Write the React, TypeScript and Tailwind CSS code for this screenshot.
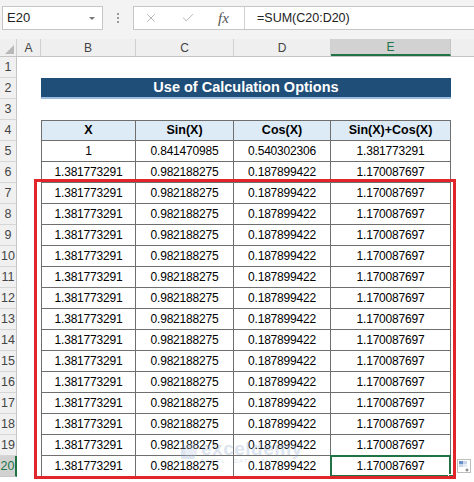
import React from 'react';
import { X, Check } from 'lucide-react';

const colWidths = ['w-[95px]', 'w-[98px]', 'w-[97px]', 'w-[120px]'];

const headers = ['X', 'Sin(X)', 'Cos(X)', 'Sin(X)+Cos(X)'];
const firstRow = ['1', '0.841470985', '0.540302306', '1.381773291'];
const repeatRow = ['1.381773291', '0.982188275', '0.187899422', '1.170087697'];

const RowHeader: React.FC<{ n: number; active?: boolean }> = ({ n, active }) => (
  <div
    className={
      active
        ? 'w-[17px] h-full flex items-center justify-center bg-[#d2d2d2] border-b border-[#c8c8c8] border-r-2 border-r-[#217346] text-[#217346] text-[12.5px]'
        : 'w-[17px] h-full flex items-center justify-center bg-[#f0f0f0] border-b border-[#d6d6d6] border-r border-r-[#c4c4c4] text-[#444] text-[12.5px]'
    }
  >
    {n}
  </div>
);

const Cell: React.FC<{
  i: number;
  top?: boolean;
  head?: boolean;
  selected?: boolean;
  children?: React.ReactNode;
}> = ({ i, top, head, selected, children }) => {
  let cls = `${colWidths[i]} h-full relative flex items-center justify-center border-r border-b border-[#6f6f6f]`;
  if (i === 0) cls += ' border-l';
  if (top) cls += ' border-t';
  if (head) cls += ' bg-[#ddebf7] font-bold text-[12.5px]';
  else cls += ' text-[12px] tracking-[-0.2px]';
  return (
    <div className={cls}>
      {children}
      {selected && (
        <>
          <div className="absolute inset-[-1px] border-2 border-[#217346]" />
          <div className="absolute right-[-4px] bottom-[-4px] w-[6px] h-[6px] bg-[#217346] border border-white" />
        </>
      )}
    </div>
  );
};

const SheetRow: React.FC<{ n: number; children?: React.ReactNode }> = ({ n, children }) => (
  <div className="flex h-[21px]">
    <RowHeader n={n} active={n === 20} />
    <div className="w-[24px]" />
    {children}
  </div>
);

export default function App() {
  const rows = [];
  for (let n = 1; n <= 20; n++) {
    if (n === 2) {
      rows.push(
        <SheetRow key={n} n={n}>
          <div className="w-[410px] h-full flex items-center justify-center bg-[#1f4e78] border-b-2 border-[#9dbde0] text-white font-bold text-[14.5px]">
            Use of Calculation Options
          </div>
        </SheetRow>
      );
    } else if (n === 4) {
      rows.push(
        <SheetRow key={n} n={n}>
          {headers.map((h, i) => (
            <Cell key={i} i={i} top head>
              {h}
            </Cell>
          ))}
        </SheetRow>
      );
    } else if (n >= 5) {
      const vals = n === 5 ? firstRow : repeatRow;
      rows.push(
        <SheetRow key={n} n={n}>
          {vals.map((v, i) => (
            <Cell key={i} i={i} selected={n === 20 && i === 3}>
              {v}
            </Cell>
          ))}
        </SheetRow>
      );
    } else {
      rows.push(<SheetRow key={n} n={n} />);
    }
  }

  return (
    <div
      className="w-[474px] h-[482px] overflow-hidden relative bg-white text-black"
      style={{ fontFamily: '"Liberation Sans", Arial, sans-serif' }}
    >
      {/* formula bar */}
      <div className="h-[39px] bg-[#f3f3f3] flex items-start pt-[6px] pl-[2px]">
        <div className="w-[101px] h-[24px] bg-white border border-[#c6c6c6] flex items-center pl-[4px] pr-[7px] justify-between">
          <span className="text-[13px] text-[#222]">E20</span>
          <span className="w-0 h-0 border-l-[3px] border-r-[3px] border-t-[3px] border-l-transparent border-r-transparent border-t-[#777]" />
        </div>
        <div className="w-[30px] h-[24px] flex flex-col items-center justify-center gap-[2px]">
          <span className="w-[2px] h-[2px] bg-[#9a9a9a]" />
          <span className="w-[2px] h-[2px] bg-[#9a9a9a]" />
          <span className="w-[2px] h-[2px] bg-[#9a9a9a]" />
        </div>
        <div className="flex-1 h-[24px] bg-white border border-[#c6c6c6] border-r-0 flex">
          <div className="w-[111px] h-full flex items-center border-r border-[#d0d0d0]">
            <X className="ml-[10px] w-[14px] h-[14px] text-[#a6a6a6]" strokeWidth={1.4} />
            <Check className="ml-[23px] w-[14px] h-[14px] text-[#a6a6a6]" strokeWidth={1.4} />
            <span
              className="ml-[23px] text-[15px] italic text-[#555]"
              style={{ fontFamily: '"Liberation Serif", serif' }}
            >
              fx
            </span>
          </div>
          <div className="flex items-center pl-[12px] text-[12.5px] text-[#222]">=SUM(C20:D20)</div>
        </div>
      </div>

      {/* column headers */}
      <div className="flex h-[18px] bg-[#efefef] text-[12px] text-[#444] border-b border-[#c4c4c4]">
        <div className="w-[17px] h-full relative border-r border-[#d0d0d0]">
          <svg className="absolute right-[2px] bottom-[2px]" width="9" height="9" viewBox="0 0 9 9">
            <polygon points="9,0 9,9 0,9" fill="#b8b8b8" />
          </svg>
        </div>
        <div className="w-[24px] flex items-center justify-center border-r border-[#d0d0d0]">A</div>
        <div className="w-[95px] flex items-center justify-center border-r border-[#d0d0d0]">B</div>
        <div className="w-[98px] flex items-center justify-center border-r border-[#d0d0d0]">C</div>
        <div className="w-[97px] flex items-center justify-center border-r border-[#d0d0d0]">D</div>
        <div className="w-[120px] flex items-center justify-center bg-[#d2d2d2] border-b-2 border-[#217346] border-r border-r-[#c4c4c4] text-[#217346]">
          E
        </div>
        <div className="flex-1" />
      </div>

      {rows}

      {/* watermark */}
      <div className="absolute left-[180px] top-[439px] flex items-center gap-[3px] opacity-30 pointer-events-none">
        <svg width="18" height="18" viewBox="0 0 18 18">
          <rect x="1" y="3" width="14" height="13" rx="2" fill="#8fa8cc" />
          <rect x="5" y="1" width="12" height="12" rx="2" fill="#b8c9e2" />
        </svg>
        <div className="flex flex-col leading-none">
          <span className="text-[19px] font-bold text-[#8fa8cc] tracking-[0.5px]">exceldemy</span>
          <span className="text-[6px] text-[#8fa8cc] tracking-[1px]">EXCEL · DATA · BI</span>
        </div>
      </div>

      {/* red highlight */}
      <div className="absolute left-[34px] top-[179px] w-[422px] h-[300px] border-[3px] border-[#e0262a] pointer-events-none" />

      {/* quick analysis */}
      <div className="absolute left-[457px] top-[459px] w-[14px] h-[14px] bg-white border border-[#bdbdbd] flex items-center justify-center">
        <svg width="12" height="12" viewBox="0 0 12 12">
          <rect x="1" y="1" width="4" height="3" fill="#6b8fc7" />
          <rect x="5" y="1" width="4" height="3" fill="#c9d6ea" />
          <rect x="1" y="4" width="4" height="3" fill="#c9d6ea" />
          <rect x="5" y="4" width="4" height="3" fill="#e6ecf5" />
          <path d="M9 8.5v3M7.5 10h3" stroke="#666" strokeWidth="1" />
        </svg>
      </div>
    </div>
  );
}
